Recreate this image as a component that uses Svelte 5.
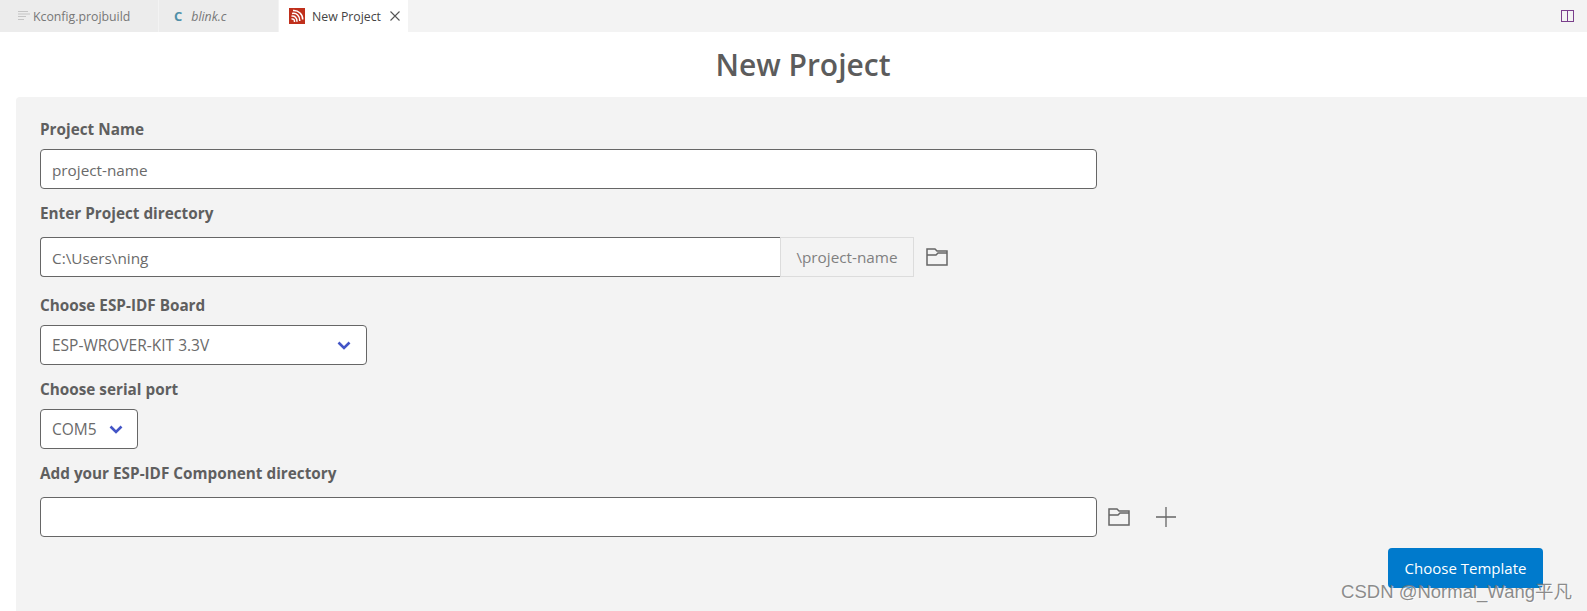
<script lang="ts">
  // tabs along the top of the editor
  const tabs = [
    { name: "Kconfig.projbuild", kind: "file" },
    { name: "blink.c", kind: "c" },
    { name: "New Project", kind: "esp" }
  ];
</script>

{#snippet folder()}
  <svg class="folder" width="22" height="18" viewBox="0 0 22 18" fill="none" stroke="#666" stroke-width="1.5">
    <path d="M1 17V1H9L11 3H21V17Z" />
    <path d="M1 7H10L12 5H21" />
  </svg>
{/snippet}

{#snippet chevron()}
  <svg width="14" height="9" viewBox="0 0 14 9" fill="none" stroke="#4355c6" stroke-width="2.6">
    <path d="M1.500 1.500L7 7L12.500 1.500" />
  </svg>
{/snippet}

<div class="tabbar">
  {#each tabs as tab}
    <div class="tab {tab.kind}">
      {#if tab.kind === "file"}
        <svg width="12" height="10" viewBox="0 0 12 10" fill="none" stroke="#c4c4c4" stroke-width="1">
          <path d="M0 .5H10M0 3H12M0 5.500H8M0 8.500H6" />
        </svg>
      {:else if tab.kind === "c"}
        <span class="c-icon">C</span>
      {:else}
        <svg width="16" height="16" viewBox="0 0 16 16" fill="none">
          <rect width="16" height="16" fill="#c0301c" />
          <g stroke="#fff" stroke-width="1.500" fill="none">
            <path d="M3 5.500C7.500 4.500 11 8 10.800 13" />
            <path d="M4 2.500C9.500 2 14 6.500 13.700 11.500" />
            <path d="M2.500 8.200C5.500 7.500 8.300 10 8 13.700" />
            <path d="M2.500 11C4.500 10.500 5.800 12 5.500 14" />
          </g>
        </svg>
      {/if}
      <span class="tab-name">{tab.name}</span>
      {#if tab.kind === "esp"}
        <svg class="close" width="10" height="10" viewBox="0 0 10 10" stroke="#555" stroke-width="1.100">
          <path d="M.5 .5L9.500 9.500M9.500 .5L.5 9.500" />
        </svg>
      {/if}
    </div>
  {/each}
  <svg class="split" width="14" height="13" viewBox="0 0 14 13" fill="none" stroke="#7a3f8c" stroke-width="1">
    <rect x=".5" y=".5" width="12" height="11" />
    <path d="M6.500 .5V11.500" />
  </svg>
</div>

<h1>New Project</h1>

<main class="panel">
  <label class="first" for="name">Project Name</label>
  <input id="name" class="wide" value="project-name" />

  <label class="dir-label" for="dir">Enter Project directory</label>
  <div class="row dir-row">
    <input id="dir" class="dir" value="C:\Users\ning" />
    <span class="suffix">\project-name</span>
    {@render folder()}
  </div>

  <label class="board-label" for="board">Choose ESP-IDF Board</label>
  <div id="board" class="select board">
    <span>ESP-WROVER-KIT 3.3V</span>
    {@render chevron()}
  </div>

  <label for="port">Choose serial port</label>
  <div id="port" class="select port">
    <span>COM5</span>
    {@render chevron()}
  </div>

  <label class="comp-label" for="comp">Add your ESP-IDF Component directory</label>
  <div class="row comp-row">
    <input id="comp" class="wide" />
    {@render folder()}
    <svg class="plus" width="22" height="22" viewBox="0 0 22 22" stroke="#666" stroke-width="1.300">
      <path d="M11 1V21M1 11H21" />
    </svg>
  </div>

  <div class="actions">
    <button>Choose Template</button>
  </div>
</main>

<div class="watermark">CSDN @Normal_Wang平凡</div>

<style>
  :global(body) {
    margin: 0;
    background: #fff;
    overflow: hidden;
    font-family: "Open Sans", "Noto Sans", sans-serif;
    color: #555;
  }

  .tabbar {
    display: flex;
    height: 32px;
    background: #f3f3f3;
    position: relative;
  }

  .tab {
    display: flex;
    align-items: center;
    font-size: 12.300px;
    background: #ececec;
    color: #777;
    border-right: 1px solid #f3f3f3;
    box-sizing: border-box;
  }

  .tab.file {
    width: 159px;
    padding-left: 18px;
    gap: 3px;
  }

  .tab.c {
    width: 120px;
    padding-left: 15px;
    gap: 9px;
    font-style: italic;
  }

  .c-icon {
    font-style: normal;
    font-weight: 700;
    font-size: 13px;
    color: #4f8fa8;
  }

  .tab.esp {
    width: 129px;
    padding-left: 10px;
    gap: 7px;
    background: #fff;
    color: #444;
    border-right: none;
  }

  .close {
    margin-left: 2px;
  }

  .split {
    margin-left: auto;
    margin-right: 12px;
    align-self: center;
  }

  h1 {
    margin: 0;
    padding-left: 19px;
    height: 65px;
    line-height: 65px;
    text-align: center;
    font-size: 30px;
    font-weight: 600;
    color: #5c5c5c;
  }

  .panel {
    margin-left: 16px;
    height: 514px;
    padding: 22px 24px 0;
    background: #f3f3f3;
    border-radius: 4px 0 0 0;
    box-sizing: border-box;
  }

  label {
    display: block;
    font-size: 15.300px;
    font-weight: 700;
    line-height: 20px;
    color: #5f5f5f;
    margin: 14px 0 10px;
  }

  label.first {
    margin-top: 0;
  }

  label.dir-label {
    margin-top: 14px;
    margin-bottom: 14px;
  }

  label.board-label {
    margin-top: 18px;
    margin-bottom: 10px;
  }

  label.comp-label {
    margin-top: 14px;
    margin-bottom: 14px;
  }

  input {
    display: block;
    height: 40px;
    padding: 1px 11px 0;
    font: inherit;
    font-size: 15.300px;
    color: #6a6a6a;
    background: #fff;
    border: 1px solid #666;
    border-radius: 4px;
    box-sizing: border-box;
    outline: none;
  }

  .wide {
    width: 1057px;
  }

  .row {
    display: flex;
    align-items: center;
  }

  .dir {
    width: 740px;
    border-right: none;
    border-radius: 4px 0 0 4px;
  }

  .suffix {
    display: flex;
    align-items: center;
    justify-content: center;
    width: 134px;
    height: 40px;
    font-size: 15.300px;
    color: #808080;
    background: #f3f3f3;
    border: 1px solid #dcdcdc;
    box-sizing: border-box;
  }

  .folder {
    margin-left: 12px;
  }

  .comp-row .folder {
    margin-left: 11px;
  }

  .plus {
    margin-left: 25px;
  }

  .select {
    display: flex;
    align-items: center;
    justify-content: space-between;
    height: 40px;
    padding: 0 11px;
    font-size: 15.500px;
    color: #6a6a6a;
    background: #fff;
    border: 1px solid #666;
    border-radius: 4px;
    box-sizing: border-box;
  }

  .board {
    width: 327px;
    padding-right: 15px;
  }

  .port {
    width: 98px;
    padding-right: 14px;
  }

  .actions {
    display: flex;
    justify-content: flex-end;
    margin-top: 11px;
    margin-right: 20px;
  }

  button {
    width: 155px;
    height: 40px;
    padding: 0;
    font: inherit;
    font-size: 15px;
    color: #fff;
    background: #007acc;
    border: none;
    border-radius: 4px;
  }

  .watermark {
    position: absolute;
    right: 15px;
    top: 582px;
    font-family: "Liberation Sans", "Noto Sans CJK SC", sans-serif;
    font-size: 18.500px;
    line-height: 20px;
    color: rgba(120, 120, 120, 0.85);
    text-shadow: 1px 1px 0 rgba(255, 255, 255, 0.6);
  }
</style>
